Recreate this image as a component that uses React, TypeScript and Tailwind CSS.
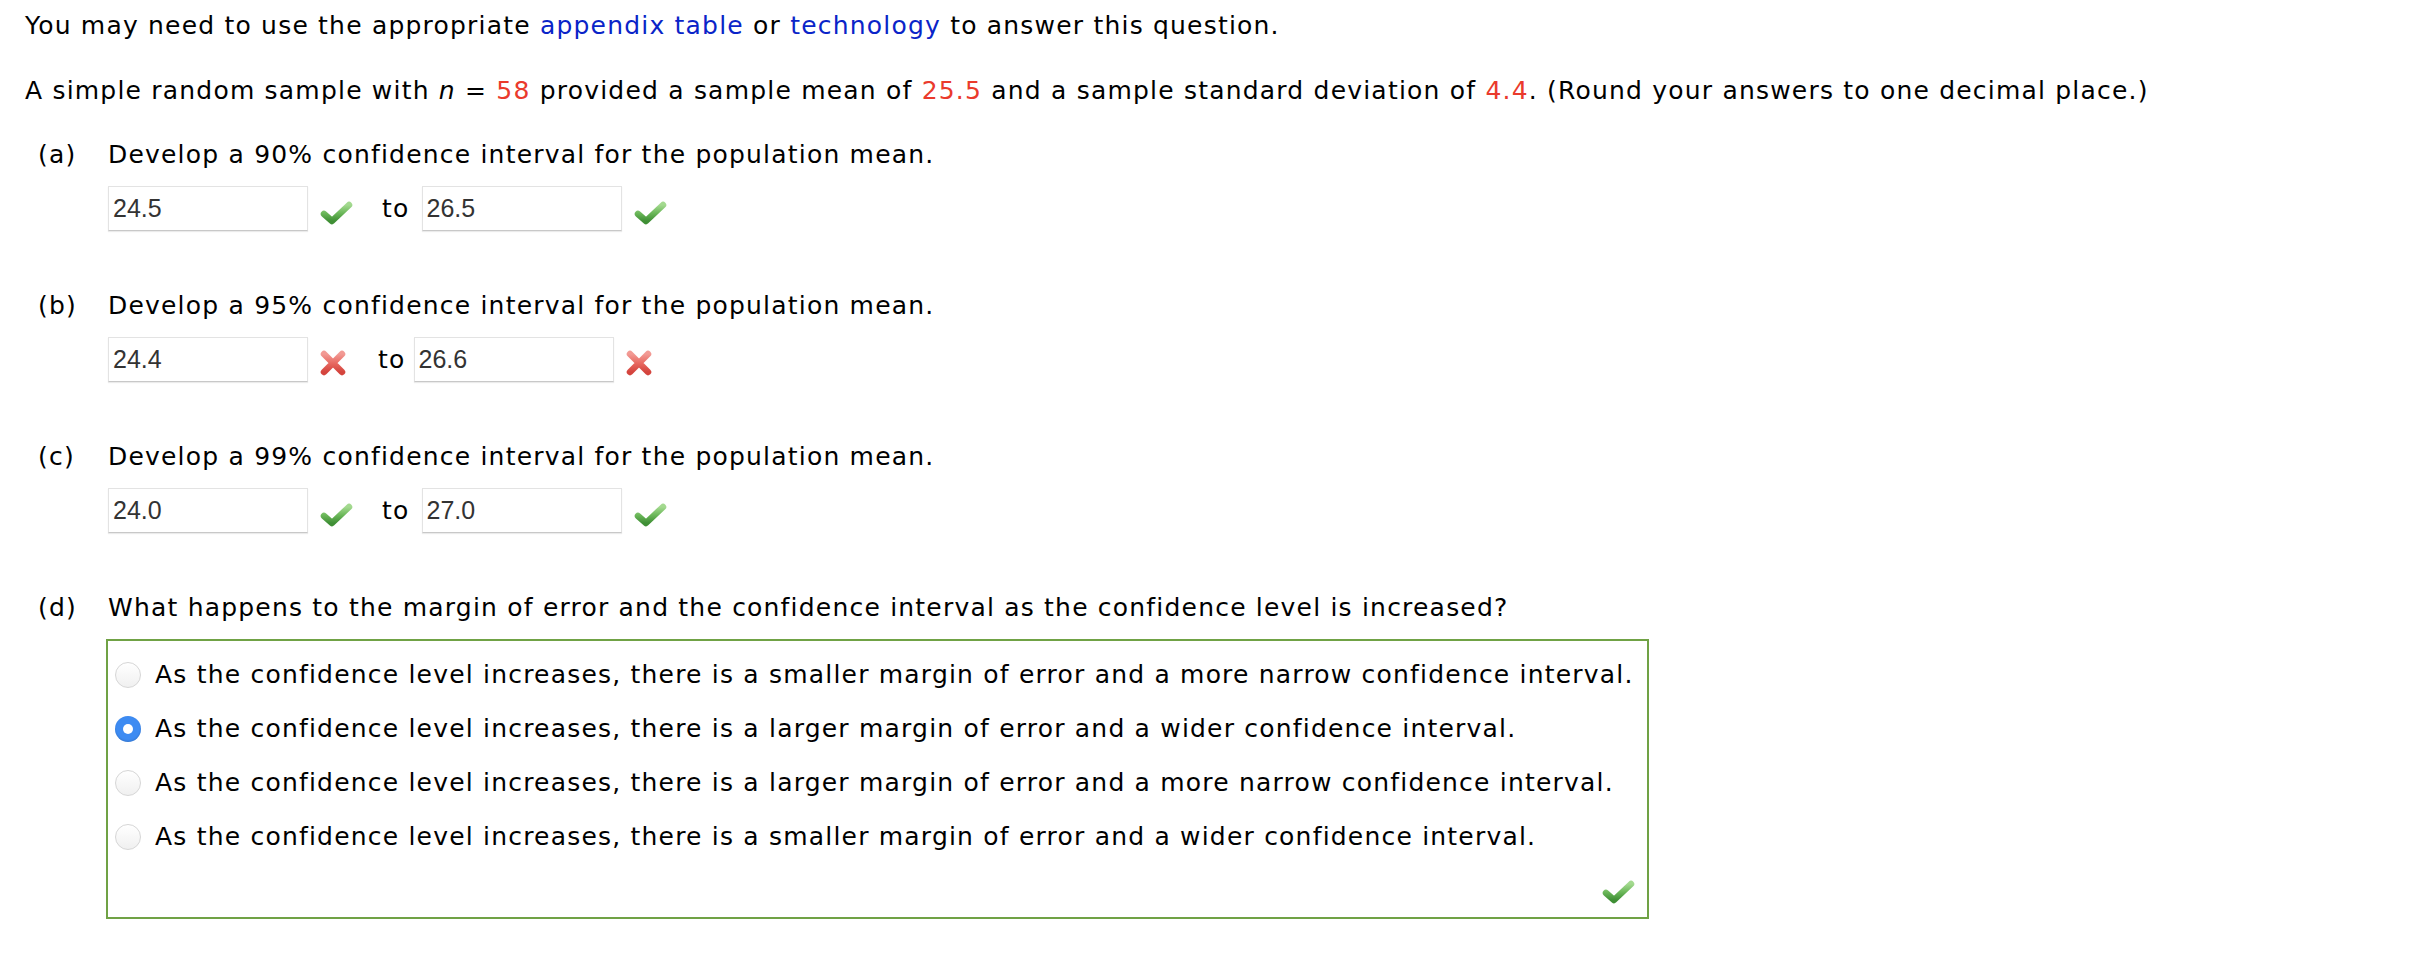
import React from "react";

const Check = ({ className = "" }: { className?: string }) => (
  <svg className={className} width="34" height="28" viewBox="0 0 34 28">
    <defs>
      <linearGradient id="cg" x1="0" y1="0" x2="0" y2="1">
        <stop offset="0" stopColor="#a3d98f" />
        <stop offset="0.5" stopColor="#6cb85a" />
        <stop offset="1" stopColor="#3f8f35" />
      </linearGradient>
    </defs>
    <path
      d="M5 16 L13 23 L30 7"
      fill="none"
      stroke="url(#cg)"
      strokeWidth="6.5"
      strokeLinecap="round"
      strokeLinejoin="round"
    />
  </svg>
);

const Cross = ({ className = "" }: { className?: string }) => (
  <svg className={className} width="30" height="30" viewBox="0 0 30 30">
    <defs>
      <linearGradient id="xg" x1="0" y1="0" x2="0" y2="1">
        <stop offset="0" stopColor="#f29a94" />
        <stop offset="0.5" stopColor="#e86a62" />
        <stop offset="1" stopColor="#d4443d" />
      </linearGradient>
    </defs>
    <path
      d="M6 6 L24 24 M24 6 L6 24"
      fill="none"
      stroke="url(#xg)"
      strokeWidth="6.5"
      strokeLinecap="round"
    />
  </svg>
);

const Field = ({ value }: { value: string }) => (
  <div
    className="w-[200px] h-[45px] border border-[#e3e3e3] border-b-[#c8c8c8] shadow-[0_1px_1px_rgba(0,0,0,0.08)] bg-white flex items-center pl-[4px] text-[#333] text-[25px] tracking-normal"
    style={{ fontFamily: '"Liberation Sans", Arial, sans-serif' }}
  >
    {value}
  </div>
);

const Mark = ({ ok }: { ok: boolean }) =>
  ok ? <Check className="ml-[11px] mt-[6px]" /> : <Cross className="ml-[10px] mt-[6px]" />;

const Part = ({
  label,
  text,
  lo,
  hi,
  ok,
  first,
}: {
  label: string;
  text: string;
  lo: string;
  hi: string;
  ok: boolean;
  first?: boolean;
}) => (
  <div className={first ? "mt-[28px]" : "mt-[57px]"}>
    <div className="flex h-[36px] items-center leading-[36px]">
      <span className="w-[83px] pl-[13px] shrink-0">{label}</span>
      <span>{text}</span>
    </div>
    <div className="flex items-center mt-[13px] pl-[83px]">
      <Field value={lo} />
      <Mark ok={ok} />
      <span className={ok ? "ml-[29px] mr-[12px]" : "ml-[30px] mr-[8px]"}>to</span>
      <Field value={hi} />
      <Mark ok={ok} />
    </div>
  </div>
);

const Radio = ({ checked }: { checked?: boolean }) =>
  checked ? (
    <span className="w-[26px] h-[26px] rounded-full bg-[#3d8bf2] flex items-center justify-center shrink-0 shadow-[inset_0_-1px_2px_rgba(0,0,0,0.15)]">
      <span className="w-[10px] h-[10px] rounded-full bg-white" />
    </span>
  ) : (
    <span className="w-[26px] h-[26px] rounded-full border border-[#d6d6d6] bg-gradient-to-b from-white to-[#f0f0f0] shrink-0" />
  );

const options = [
  "As the confidence level increases, there is a smaller margin of error and a more narrow confidence interval.",
  "As the confidence level increases, there is a larger margin of error and a wider confidence interval.",
  "As the confidence level increases, there is a larger margin of error and a more narrow confidence interval.",
  "As the confidence level increases, there is a smaller margin of error and a wider confidence interval.",
];

export default function App() {
  return (
    <div
      className="w-[2414px] h-[956px] bg-white text-black text-[25px] tracking-[1.2px] pl-[25px] pt-[8px]"
      style={{ fontFamily: '"DejaVu Sans", Verdana, sans-serif' }}
    >
      <div className="h-[36px] leading-[36px] whitespace-nowrap">
        You may need to use the appropriate <span className="text-[#0a24c8]">appendix table</span> or{" "}
        <span className="text-[#0a24c8]">technology</span> to answer this question.
      </div>
      <div className="h-[36px] leading-[36px] mt-[29px] whitespace-nowrap">
        A simple random sample with <i>n</i> = <span className="text-[#ea3a2c]">58</span> provided a sample mean of{" "}
        <span className="text-[#ea3a2c]">25.5</span> and a sample standard deviation of{" "}
        <span className="text-[#ea3a2c]">4.4</span>. (Round your answers to one decimal place.)
      </div>
      <Part first label="(a)" text="Develop a 90% confidence interval for the population mean." lo="24.5" hi="26.5" ok />
      <Part label="(b)" text="Develop a 95% confidence interval for the population mean." lo="24.4" hi="26.6" ok={false} />
      <Part label="(c)" text="Develop a 99% confidence interval for the population mean." lo="24.0" hi="27.0" ok />
      <div className="mt-[57px]">
        <div className="flex h-[36px] items-center leading-[36px]">
          <span className="w-[83px] pl-[13px] shrink-0">(d)</span>
          <span className="whitespace-nowrap">
            What happens to the margin of error and the confidence interval as the confidence level is increased?
          </span>
        </div>
        <div className="ml-[81px] mt-[13px] w-[1543px] h-[280px] border-2 border-[#70a245] pt-[7px] flex flex-col">
          {options.map((o, i) => (
            <div key={i} className="h-[54px] flex items-center pl-[7px] gap-[14px]">
              <Radio checked={i === 1} />
              <span className="leading-[36px] whitespace-nowrap">{o}</span>
            </div>
          ))}
          <div className="flex justify-end pr-[12px] mt-[13px]">
            <Check />
          </div>
        </div>
      </div>
    </div>
  );
}
